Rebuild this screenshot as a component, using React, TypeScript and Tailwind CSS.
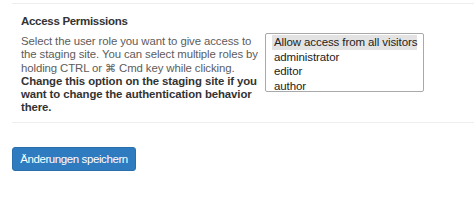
export default function App() {
  return (
    <div className="w-[474px] h-[201px] bg-white pt-[3px] pl-[12px]" style={{ fontFamily: '"Liberation Sans", Arial, sans-serif' }}>
      <div className="border-t border-[#eeeeee] border-b flex pl-[9px] pt-[9px] pb-[7px]">
        <div className="w-[232px] whitespace-nowrap">
          <div className="text-[11.5px] font-bold text-[#333] leading-[16px] mb-[6px] tracking-[-0.3px]">Access Permissions</div>
          <p className="text-[11.4px] leading-[13.25px] text-[#5c5c5c] tracking-[-0.1px]">
            Select the user role you want to give access to<br />
            the staging site. You can select multiple roles by<br />
            holding CTRL or ⌘ Cmd key while clicking.<br />
            <b className="text-[#333]">Change this option on the staging site if you<br />
            want to change the authentication behavior<br />
            there.</b>
          </p>
        </div>
        <div className="ml-[12px] mt-[20px]">
          <div className="w-[159px] h-[59px] border border-[#a9a9a9] rounded-[2px] pt-[1px] pl-[6px] text-[11.5px] leading-[14.5px] text-[#222] tracking-[-0.1px] whitespace-nowrap">
            <div className="bg-[#e3e3e3] w-[145px] pl-[2px]">Allow access from all visitors</div>
            <div className="pl-[2px]">administrator</div>
            <div className="pl-[2px]">editor</div>
            <div className="pl-[2px]">author</div>
          </div>
        </div>
      </div>
      <div className="mt-[23px]">
        <button className="w-[124px] h-[24px] bg-[#2e7bc0] text-white text-[11.5px] tracking-[-0.4px] rounded-[3px] border border-[#2a6fad] whitespace-nowrap">Änderungen speichern</button>
      </div>
    </div>
  );
}
